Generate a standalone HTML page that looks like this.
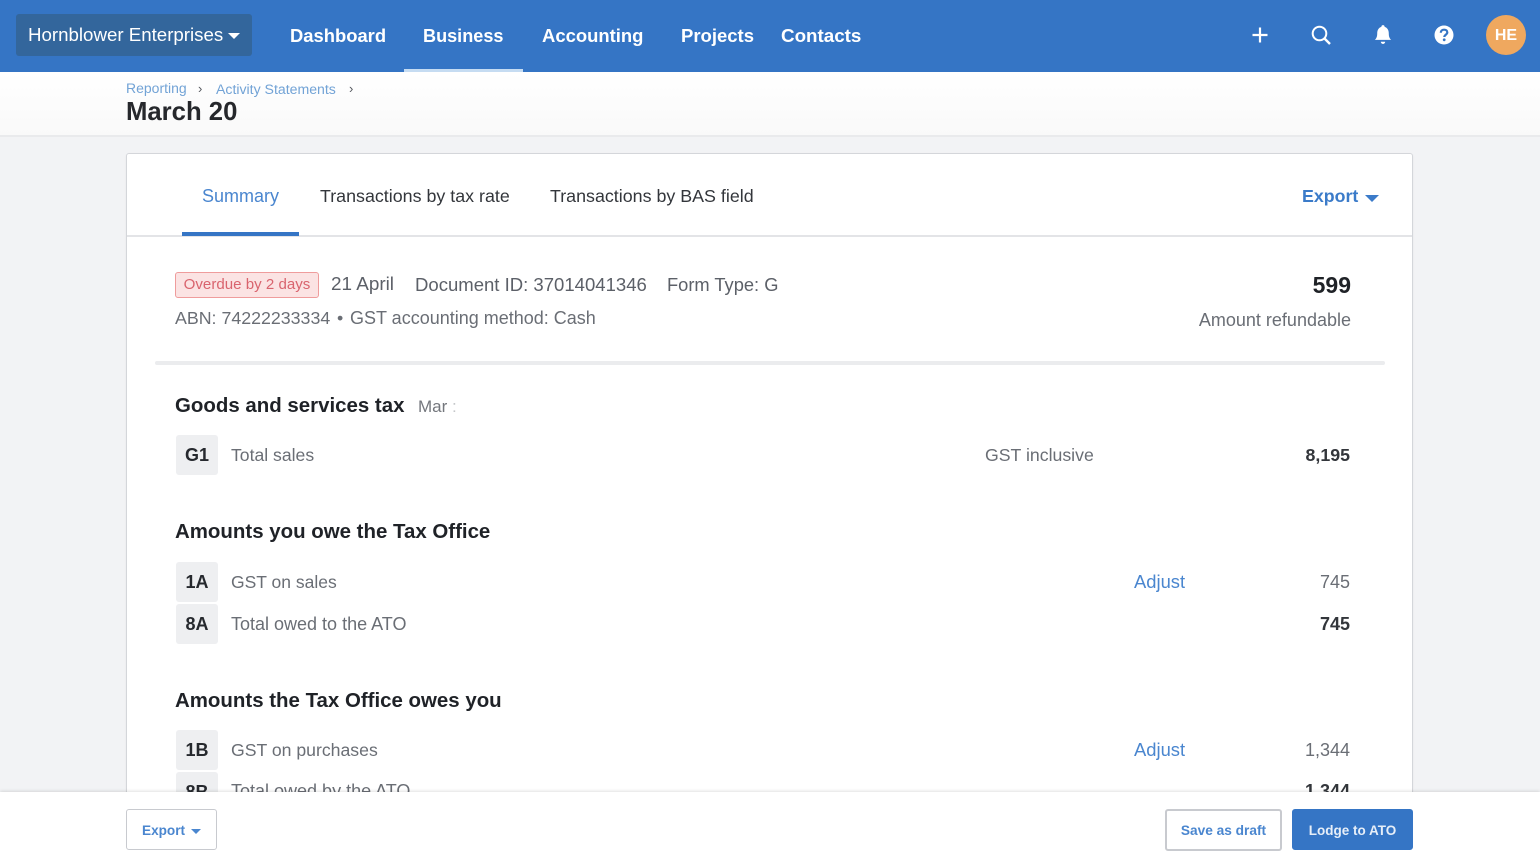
<!DOCTYPE html>
<html>
<head>
<meta charset="utf-8">
<style>
html,body{margin:0;padding:0}
body{width:1540px;height:863px;overflow:hidden;position:relative;background:#f2f3f5;font-family:"Liberation Sans",sans-serif;color:#5c6068;filter:blur(.35px)}
.t{position:absolute;white-space:nowrap;line-height:24px;height:24px}
.b{font-weight:bold}
.dk{color:#1f2227}
.lnk{color:#4a86cf}
#nav{position:absolute;left:0;top:0;width:1540px;height:72px;background:#3575c5}
#org{position:absolute;left:16px;top:14px;width:236px;height:42px;background:#33669c;border-radius:3px}
#ul{position:absolute;left:404px;top:69px;width:119px;height:3px;background:#c6dcf2}
#head{position:absolute;left:0;top:72px;width:1540px;height:63px;background:linear-gradient(#fff,#f9f9f9);border-bottom:2px solid #e9eaec}
#card{position:absolute;left:126px;top:153px;width:1285px;height:700px;background:#fff;border:1px solid #d4d6da;border-radius:3px;box-shadow:0 1px 2px rgba(0,0,0,.05)}
#tabline{position:absolute;left:127px;top:235px;width:1285px;height:2px;background:#e3e4e7}
#tabul{position:absolute;left:182px;top:232px;width:117px;height:4px;background:#3575c5}
#hr{position:absolute;left:155px;top:361px;width:1230px;height:4px;background:#ebecee;border-radius:2px}
.code{position:absolute;left:176px;width:42px;height:40px;background:#eeeff1;border-radius:3px;color:#26292e;font-weight:bold;font-size:18px;line-height:41px;text-align:center}
#badge{position:absolute;left:175px;top:272px;width:142px;height:24px;background:#fbe3e3;border:1px solid #ef9c9c;border-radius:3px;color:#d9646e;font-size:15.1px;line-height:24px;text-align:center;white-space:nowrap}
#foot{position:absolute;left:0;top:792px;width:1540px;height:71px;background:#fff;box-shadow:0 -1px 3px rgba(0,0,0,.12)}
.btn{position:absolute;top:809px;height:39px;border:1px solid #c8cacf;border-radius:3px;background:#fff;color:#4a86cf;font-weight:bold;font-size:13.7px;line-height:41px;text-align:center;white-space:nowrap}
svg{position:absolute}
</style>
</head>
<body>
<div id="card"></div>
<div id="tabline"></div>
<div id="tabul"></div>
<div class="t lnk" style="left:202px;top:184px;font-size:18px">Summary</div>
<div class="t" style="left:320px;top:184px;font-size:17.85px;color:#33363b">Transactions by tax rate</div>
<div class="t" style="left:550px;top:184px;font-size:17.85px;color:#33363b">Transactions by BAS field</div>
<div class="t b" style="left:1302px;top:184px;font-size:17.8px;color:#3b7bc9">Export</div>
<div style="position:absolute;left:1365px;top:195px;width:0;height:0;border-left:7px solid transparent;border-right:7px solid transparent;border-top:7px solid #3b7bc9"></div>

<div id="badge">Overdue by 2 days</div>
<div class="t" style="left:331px;top:274px;font-size:18.9px;line-height:22px">21 April</div>
<div class="t" style="left:415px;top:273px;font-size:18.55px">Document ID: 37014041346</div>
<div class="t" style="left:667px;top:273px;font-size:18.3px">Form Type: G</div>
<div class="t" style="left:175px;top:306px;font-size:17.8px;color:#6a6e75">ABN: 74222233334</div>
<div class="t" style="left:337px;top:306px;font-size:17.8px;color:#6a6e75">•</div>
<div class="t" style="left:350px;top:306px;font-size:18px;color:#6a6e75">GST accounting method: Cash</div>
<div class="t b dk" style="right:189px;top:273px;font-size:23px">599</div>
<div class="t" style="right:189px;top:308px;font-size:18px;color:#6a6e75">Amount refundable</div>
<div id="hr"></div>

<div class="t b dk" style="left:175px;top:394px;font-size:20.45px">Goods and services tax</div>
<div class="t" style="left:418px;top:395px;font-size:17px;color:#74777d">Mar <span style="color:#c5c7ca">:</span></div>
<div class="code" style="top:435px">G1</div>
<div class="t" style="left:231px;top:443px;font-size:17.6px;color:#6a6e75">Total sales</div>
<div class="t" style="left:985px;top:443px;font-size:17.7px;color:#6a6e75">GST inclusive</div>
<div class="t b" style="right:190px;top:443px;font-size:17.8px;color:#33363b">8,195</div>

<div class="t b dk" style="left:175px;top:520px;font-size:20.45px">Amounts you owe the Tax Office</div>
<div class="code" style="top:562px">1A</div>
<div class="t" style="left:231px;top:570px;font-size:17.5px;color:#6a6e75">GST on sales</div>
<div class="t lnk" style="left:1134px;top:570px;font-size:18.4px">Adjust</div>
<div class="t" style="right:190px;top:570px;font-size:18px;color:#6a6e75">745</div>
<div class="code" style="top:604px">8A</div>
<div class="t" style="left:231px;top:612px;font-size:18px;color:#6a6e75">Total owed to the ATO</div>
<div class="t b" style="right:190px;top:612px;font-size:18px;color:#33363b">745</div>

<div class="t b dk" style="left:175px;top:689px;font-size:20.45px">Amounts the Tax Office owes you</div>
<div class="code" style="top:730px">1B</div>
<div class="t" style="left:231px;top:738px;font-size:17.65px;color:#6a6e75">GST on purchases</div>
<div class="t lnk" style="left:1134px;top:738px;font-size:18.4px">Adjust</div>
<div class="t" style="right:190px;top:738px;font-size:18px;color:#6a6e75">1,344</div>
<div class="code" style="top:772px">8B</div>
<div class="t" style="left:231px;top:779px;font-size:18px;color:#6a6e75">Total owed by the ATO</div>
<div class="t b" style="right:190px;top:779px;font-size:18px;color:#33363b">1,344</div>

<div id="nav"></div>
<div id="org"></div>
<div class="t" style="left:28px;top:23px;font-size:18.7px;color:#fff">Hornblower Enterprises</div>
<div style="position:absolute;left:228px;top:33px;width:0;height:0;border-left:6px solid transparent;border-right:6px solid transparent;border-top:6px solid #fff"></div>
<div class="t b" style="left:290px;top:24px;font-size:18.4px;color:#fff">Dashboard</div>
<div class="t b" style="left:423px;top:24px;font-size:18.1px;color:#fff">Business</div>
<div class="t b" style="left:542px;top:24px;font-size:18.45px;color:#fff">Accounting</div>
<div class="t b" style="left:681px;top:24px;font-size:18.5px;color:#fff">Projects</div>
<div class="t b" style="left:781px;top:24px;font-size:18.8px;color:#fff">Contacts</div>
<div id="ul"></div>

<svg style="left:1250px;top:25px" width="20" height="20" viewBox="0 0 20 20"><path d="M10 2.500v15M2.500 10h15" stroke="#fff" stroke-width="2.200" fill="none"/></svg>
<svg style="left:1310px;top:24px" width="22" height="22" viewBox="0 0 22 22"><circle cx="9.500" cy="9.500" r="6.800" stroke="#fff" stroke-width="2" fill="none"/><path d="M14.500 14.500l5.500 5.500" stroke="#fff" stroke-width="2.400" fill="none"/></svg>
<svg style="left:1371px;top:23px" width="24" height="24" viewBox="0 0 22 22"><path d="M11 2c1 0 1.500.7 1.500 1.500C15 4.300 16.300 6.500 16.300 9.500c0 3 .7 4.600 2.200 6H3.500c1.500-1.400 2.200-3 2.200-6 0-3 1.300-5.200 3.800-6C9.500 2.700 10 2 11 2z" fill="#fff"/><path d="M9 17.200h4a2 2 0 0 1-4 0z" fill="#fff"/></svg>
<svg style="left:1433px;top:23.500px" width="22" height="22" viewBox="0 0 22 22"><circle cx="11" cy="11" r="9.500" fill="#fff"/><path d="M7.800 8.700c0-2 1.500-3 3.300-3 1.800 0 3.200 1 3.200 2.700 0 2.300-3 2.300-3 4.600" stroke="#3575c5" stroke-width="2.200" fill="none"/><circle cx="11.200" cy="15.800" r="1.400" fill="#3575c5"/></svg>
<div style="position:absolute;left:1486px;top:15px;width:40px;height:40px;border-radius:50%;background:#efa85f;color:#fff;font-weight:bold;font-size:16px;line-height:41px;text-align:center">HE</div>

<div id="head"></div>
<div class="t" style="left:126px;top:76px;font-size:14px;color:#72a3d6">Reporting</div>
<div class="t" style="left:198px;top:77px;font-size:13px;color:#55585e">›</div>
<div class="t" style="left:216px;top:77px;font-size:14.1px;color:#72a3d6">Activity Statements</div>
<div class="t" style="left:349px;top:77px;font-size:13px;color:#55585e">›</div>
<div class="t b" style="left:126px;top:100px;font-size:25.7px;color:#26282c">March 20</div>

<div id="foot"></div>
<div class="btn" style="left:126px;width:89px"><span style="position:absolute;left:15px;top:0;font-size:13.6px">Export</span><span style="position:absolute;left:64px;top:19px;width:0;height:0;border-left:5px solid transparent;border-right:5px solid transparent;border-top:5px solid #4a86cf"></span></div>
<div class="btn" style="left:1165px;border-width:2px;height:38px;width:113px;line-height:39px">Save as draft</div>
<div class="btn" style="left:1292px;width:119px;background:#3575c5;border-color:#3575c5;color:#e6eef8;font-size:13.5px">Lodge to ATO</div>
</body>
</html>
